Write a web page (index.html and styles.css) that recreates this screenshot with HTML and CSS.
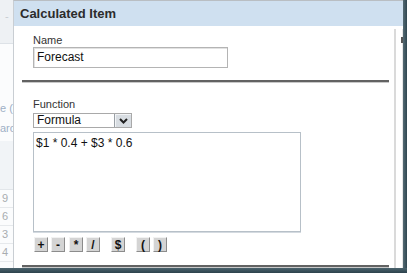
FILE: index.html
```html
<!DOCTYPE html>
<html lang="en">

<head>
  <meta charset="UTF-8">
  <title>Calculated Item</title>
  <link rel="stylesheet" href="styles.css">
</head>

<body>
  <div class="screen">
    <div class="main">
      <div class="backdrop">
        <div class="bd-head"><span class="bd-dash">-</span></div>
        <div class="bd-blank"></div>
        <div class="bd-link">e (</div>
        <div class="bd-link">arc</div>
        <div class="bd-band"></div>
        <div class="bd-row">9</div>
        <div class="bd-row">6</div>
        <div class="bd-row">3</div>
        <div class="bd-row">4</div>
      </div>

      <div class="dialog">
        <div class="titlebar">Calculated Item</div>
        <div class="dialog-body">
          <div class="content">
            <div class="field first">
              <div class="label">Name</div>
              <div class="text-input">Forecast</div>
            </div>
            <div class="rule"></div>

            <div class="field second">
              <div class="label">Function</div>
              <div class="select">
                <span class="select-value">Formula</span>
                <span class="select-btn">
                  <svg width="9" height="6" viewBox="0 0 9 6">
                    <path d="M1 1 L4.5 4.5 L8 1" fill="none" stroke="#222" stroke-width="2"/>
                  </svg>
                </span>
              </div>
              <div class="formula">$1 * 0.4 + $3 * 0.6</div>
              <div class="ops">
                <button class="op">+</button>
                <button class="op">-</button>
                <button class="op gap-s">*</button>
                <button class="op">/</button>
                <button class="op gap-l">$</button>
                <button class="op gap-l">(</button>
                <button class="op">)</button>
              </div>
            </div>
            <div class="rule bottom"></div>
          </div>
          <div class="scroll">
            <div class="scroll-mark"></div>
          </div>
        </div>
      </div>

      <div class="frame-right"></div>
    </div>
    <div class="frame-bottom"></div>
  </div>
</body>

</html>
```

FILE: styles.css
```css
body {
  margin: 0;
  font-family: "Liberation Sans", Arial, sans-serif;
  color: #222;
  background-color: #fff;
}

.screen {
  display: flex;
  flex-direction: column;
  width: 407px;
  height: 273px;
  overflow: hidden;
}

.main {
  display: flex;
  flex: 1;
  min-height: 0;
}

/* faded page behind the dialog */
.backdrop {
  width: 13px;
  background-color: #fbfcfd;
  font-size: 11px;
  color: #b0b4b8;
  overflow: hidden;
}

.bd-head {
  height: 44px;
  background-color: #eef1f4;
  border-bottom: 1px solid #dde2e7;
  padding-top: 10px;
  box-sizing: border-box;
}

.bd-dash {
  display: block;
  padding-left: 5px;
  color: #c8ccd0;
}

.bd-blank {
  height: 57px;
}

.bd-link {
  height: 20px;
  line-height: 14px;
  color: #9eb0c6;
  white-space: nowrap;
}

.bd-band {
  height: 48px;
  background-color: #f1f4f7;
  border-bottom: 1px solid #e2e6ea;
}

.bd-row {
  height: 17px;
  line-height: 17px;
  padding-left: 2px;
  border-bottom: 1px solid #e6e9ec;
  color: #a8acb0;
  white-space: nowrap;
}

.dialog {
  flex: 1;
  display: flex;
  flex-direction: column;
  border-left: 1px solid #c9ced3;
  border-top: 1px solid #b9bec3;
  min-width: 0;
}

.titlebar {
  height: 25px;
  line-height: 25px;
  padding-left: 6px;
  background-color: #cfe0f0;
  font-size: 13px;
  font-weight: bold;
  color: #2c2c2c;
}

.dialog-body {
  display: flex;
  flex: 1;
}

.content {
  flex: 1;
  padding-right: 5px;
}

.field {
  padding-left: 19px;
}

.field.first {
  padding-top: 8px;
}

.field.second {
  padding-top: 16px;
}

.label {
  font-size: 11px;
  line-height: 13px;
  color: #333;
}

.text-input {
  width: 195px;
  height: 21px;
  box-sizing: border-box;
  border: 1px solid #b4b4b4;
  box-shadow: inset 1px 1px 0 #e2e2e2;
  padding-left: 3px;
  font-size: 12px;
  line-height: 19px;
  color: #111;
}

.rule {
  margin: 12px 0 0 8px;
  height: 2px;
  background-color: #626262;
  box-shadow: 0 1px 0 #c8c8c8;
}

.rule.bottom {
  margin-top: 13px;
}

.select {
  display: flex;
  width: 99px;
  height: 15px;
  margin-top: 2px;
  box-sizing: border-box;
  border: 1px solid #a9a9a9;
}

.select-value {
  flex: 1;
  padding-left: 3px;
  font-size: 12px;
  line-height: 13px;
  color: #111;
}

.select-btn {
  display: flex;
  align-items: center;
  justify-content: center;
  width: 16px;
  background-color: #d8dde2;
  border-left: 1px solid #9aa0a6;
  box-shadow: inset 1px 1px 0 #f2f4f6;
}

.formula {
  width: 268px;
  height: 100px;
  margin-top: 4px;
  box-sizing: border-box;
  border: 1px solid #b7c0c8;
  box-shadow: 0 1px 0 #d4dae0;
  padding: 3px 2px;
  font-size: 12px;
  line-height: 14px;
  color: #111;
}

.ops {
  display: flex;
  gap: 3px;
  margin-top: 5px;
  padding-left: 1px;
}

.op {
  width: 14px;
  height: 15px;
  padding: 0;
  border: 1px solid;
  border-color: #f2f2f2 #8c8c8c #8c8c8c #f2f2f2;
  background-color: #d4d4d4;
  font-family: "Liberation Sans", Arial, sans-serif;
  font-size: 12px;
  font-weight: bold;
  line-height: 12px;
  color: #111;
}

.op.gap-s {
  margin-left: 1px;
}

.op.gap-l {
  margin-left: 8px;
}

.scroll {
  position: relative;
  width: 6px;
  margin-top: 3px;
  border-left: 2px solid #dadada;
  border-right: 1px solid #e6e6e6;
  background-color: #fff;
}

.scroll-mark {
  position: absolute;
  right: -1px;
  top: 8px;
  width: 2px;
  height: 6px;
  background-color: #555;
}

.frame-right {
  width: 4px;
  background: linear-gradient(to right, #556b74, #2f4650);
}

.frame-bottom {
  height: 5px;
  background: linear-gradient(to bottom, #4b636d, #2c424c);
}
```
